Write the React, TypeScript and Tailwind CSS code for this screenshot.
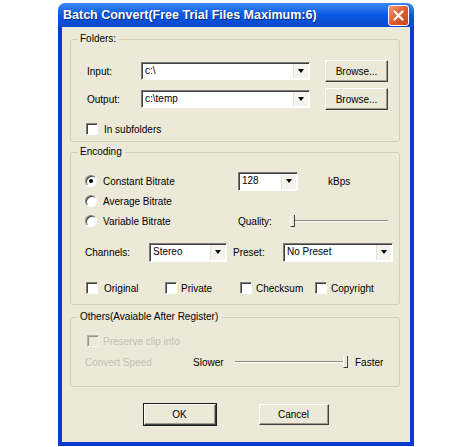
import { ReactNode } from "react";

const font = { fontFamily: '"Liberation Sans", Arial, sans-serif' };

const Group = ({ label, className, children }: { label: string; className?: string; children: ReactNode }) => {
   return (
      <fieldset className={"ml-[8px] mr-[10px] rounded-[3px] border border-[#D0D0BF] " + (className ?? "")}>
         <legend className="ml-[6px] px-[3px] leading-[14px] text-black">{label}</legend>
         {children}
      </fieldset>
   );
};

const Combo = ({ value, className }: { value: string; className: string }) => {
   return (
      <div
         className={
            "flex items-stretch bg-white border border-t-[#7A7A7A] border-l-[#7A7A7A] border-b-white border-r-white shadow-[inset_1px_1px_0_#404040] " +
            className
         }
      >
         <span className="flex-1 pl-[3px] leading-[16px] text-black">{value}</span>
         <span className="my-[1px] mr-[1px] flex w-[15px] items-center justify-center bg-[#F4F3EE] border-l border-[#E2E0D8]">
            <span className="h-0 w-0 border-x-[3px] border-t-[4px] border-x-transparent border-t-black" />
         </span>
      </div>
   );
};

const Button = ({ label, className, primary }: { label: string; className: string; primary?: boolean }) => {
   return (
      <div
         className={
            "flex items-center justify-center bg-[#ECE9D8] text-black border border-t-white border-l-white border-b-[#404040] border-r-[#404040] shadow-[inset_-1px_-1px_0_#9D9A8C] " +
            (primary ? "outline outline-1 outline-[#1E1E1E] " : "") +
            className
         }
      >
         {label}
      </div>
   );
};

const Check = ({ disabled }: { disabled?: boolean }) => {
   return (
      <span
         className={
            "block h-[12px] w-[12px] shrink-0 border border-t-[#808080] border-l-[#808080] border-b-white border-r-white shadow-[inset_1px_1px_0_#404040] " +
            (disabled ? "bg-[#ECE9D8] opacity-50" : "bg-white")
         }
      />
   );
};

const Radio = ({ checked }: { checked?: boolean }) => {
   return (
      <span className="flex h-[12px] w-[12px] shrink-0 items-center justify-center rounded-full bg-white border border-t-[#808080] border-l-[#808080] border-b-white border-r-white shadow-[inset_1px_1px_0_#404040]">
         {checked && <span className="block h-[4px] w-[4px] rounded-full bg-black" />}
      </span>
   );
};

const Slider = ({ thumbLeft, className }: { thumbLeft: boolean; className: string }) => {
   return (
      <div className={"flex items-center " + className}>
         {thumbLeft && <span className="block h-[12px] w-[5px] shrink-0 border-l border-b border-l-white border-b-[#404040] border-r border-r-[#404040]" />}
         <span className="block h-[2px] flex-1 border-t border-t-[#8C8A80] border-b border-b-white" />
         {!thumbLeft && <span className="block h-[12px] w-[5px] shrink-0 border-r border-b border-r-[#404040] border-b-[#404040] border-l border-l-white" />}
      </div>
   );
};

const App = () => {
   return (
      <div className="h-[447px] w-[474px] overflow-hidden bg-white pt-[3px] text-[10px]" style={font}>
         <div className="ml-[58px] w-[356px]">
            {/* title bar */}
            <div className="flex h-[24px] items-center justify-between rounded-t-[7px] bg-gradient-to-b from-[#3D86F2] via-[#0A58E2] to-[#0848CC] pl-[5px] pr-[5px]">
               <span className="text-[12.5px] font-bold text-white [text-shadow:1px_1px_0_#0A2B7A]">
                  Batch Convert(Free Trial Files Maximum:6)
               </span>
               <span className="flex h-[21px] w-[21px] items-center justify-center rounded-[3px] border border-white bg-gradient-to-br from-[#F09A72] via-[#E15B2E] to-[#C8451E]">
                  <svg width="11" height="11" viewBox="0 0 11 11">
                     <path d="M1.5 1.5 L9.5 9.5 M9.5 1.5 L1.5 9.5" stroke="white" strokeWidth="2.2" strokeLinecap="round" />
                  </svg>
               </span>
            </div>

            {/* client */}
            <div className="flex flex-col border-x-4 border-b-4 border-[#0A3AD2] bg-[#ECE9D8] pt-[5px]">
               <Group label="Folders:" className="pb-[5px]">
                  <div className="mt-[14px] flex h-[22px] items-center pl-[16px]">
                     <span className="w-[54px] text-black">Input:</span>
                     <Combo value="c:\" className="h-[18px] w-[169px]" />
                     <Button label="Browse..." className="ml-[15px] h-[22px] w-[63px]" />
                  </div>
                  <div className="mt-[6px] flex h-[22px] items-center pl-[16px]">
                     <span className="w-[54px] text-black">Output:</span>
                     <Combo value="c:\temp" className="h-[18px] w-[169px]" />
                     <Button label="Browse..." className="ml-[15px] h-[22px] w-[63px]" />
                  </div>
                  <div className="mt-[12px] flex h-[14px] items-center gap-[6px] pl-[15px]">
                     <Check />
                     <span className="text-black">In subfolders</span>
                  </div>
               </Group>

               <Group label="Encoding" className="mt-[3px] pb-[6px]">
                  <div className="mt-[12px] flex h-[20px] items-center pl-[14px]">
                     <div className="flex w-[153px] items-center gap-[6px]">
                        <Radio checked />
                        <span className="text-black">Constant Bitrate</span>
                     </div>
                     <Combo value="128" className="h-[19px] w-[60px]" />
                     <span className="ml-[30px] text-black">kBps</span>
                  </div>
                  <div className="flex h-[20px] items-center pl-[14px]">
                     <div className="flex w-[153px] items-center gap-[6px]">
                        <Radio />
                        <span className="text-black">Average Bitrate</span>
                     </div>
                  </div>
                  <div className="flex h-[20px] items-center pl-[14px]">
                     <div className="flex w-[153px] items-center gap-[6px]">
                        <Radio />
                        <span className="text-black">Variable Bitrate</span>
                     </div>
                     <span className="w-[52px] text-black">Quality:</span>
                     <Slider thumbLeft className="w-[98px]" />
                  </div>
                  <div className="mt-[11px] flex h-[20px] items-center pl-[14px]">
                     <span className="w-[64px] text-black">Channels:</span>
                     <Combo value="Stereo" className="h-[19px] w-[78px]" />
                     <span className="ml-[6px] w-[50px] text-black">Preset:</span>
                     <Combo value="No Preset" className="h-[19px] w-[110px]" />
                  </div>
                  <div className="mt-[16px] flex h-[20px] items-center pl-[15px]">
                     <div className="flex w-[79px] items-center gap-[6px]">
                        <Check />
                        <span className="text-black">Original</span>
                     </div>
                     <div className="flex w-[75px] items-center gap-[4px]">
                        <Check />
                        <span className="text-black">Private</span>
                     </div>
                     <div className="flex w-[75px] items-center gap-[4px]">
                        <Check />
                        <span className="text-black">Checksum</span>
                     </div>
                     <div className="flex items-center gap-[4px]">
                        <Check />
                        <span className="text-black">Copyright</span>
                     </div>
                  </div>
               </Group>

               <Group label="Others(Avaiable After Register)" className="mt-[5px] pb-[16px]">
                  <div className="mt-[9px] flex h-[16px] items-center gap-[4px] pl-[16px]">
                     <Check disabled />
                     <span className="text-[#C4C1B4]">Preserve clip info</span>
                  </div>
                  <div className="mt-[5px] flex h-[16px] items-center pl-[14px]">
                     <span className="w-[108px] text-[#C4C1B4]">Convert Speed</span>
                     <span className="w-[42px] text-black">Slower</span>
                     <Slider thumbLeft={false} className="w-[113px]" />
                     <span className="ml-[7px] text-black">Faster</span>
                  </div>
               </Group>

               <div className="mt-[17px] mb-[17px] flex justify-center gap-[43px]">
                  <Button label="OK" primary className="h-[21px] w-[72px]" />
                  <Button label="Cancel" className="h-[21px] w-[70px]" />
               </div>
            </div>
         </div>
      </div>
   );
};

export default App;
